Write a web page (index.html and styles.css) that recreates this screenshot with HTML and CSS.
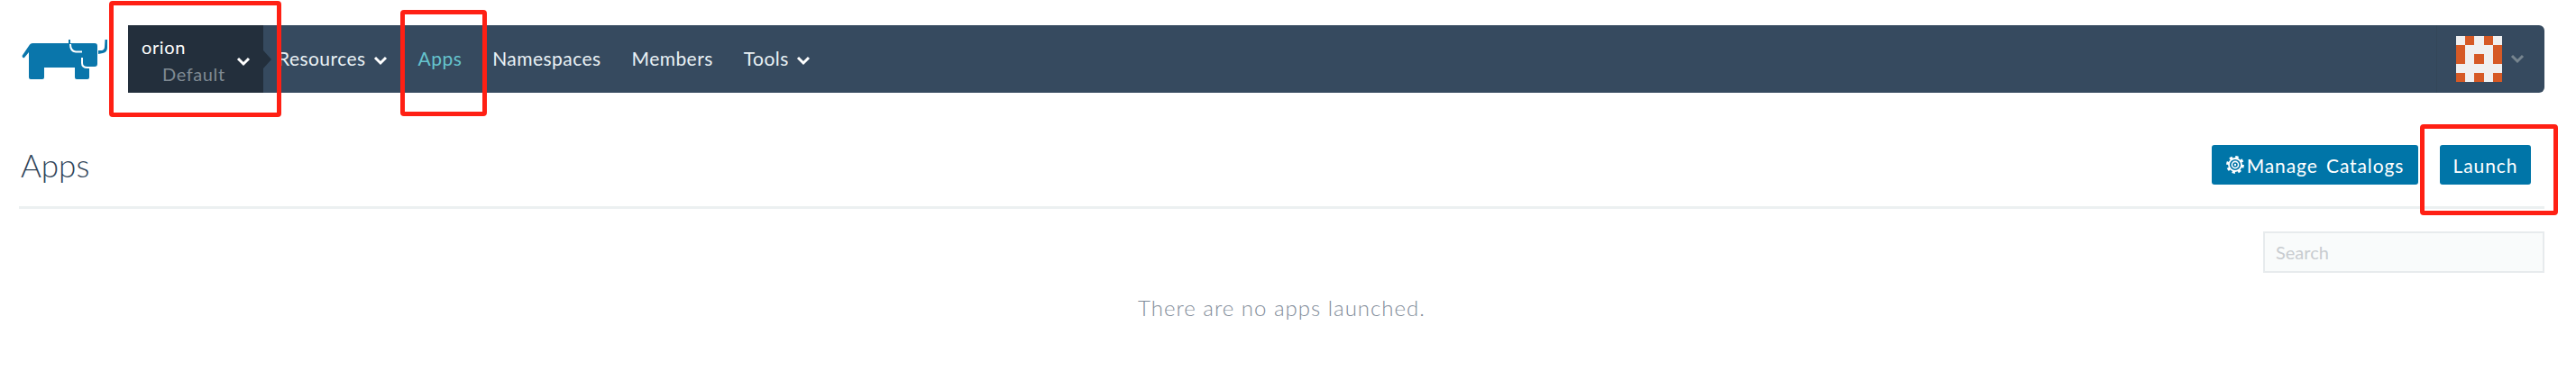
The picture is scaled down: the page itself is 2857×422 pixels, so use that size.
FILE: index.html
```html
<!DOCTYPE html>
<html lang="en">
<head>
  <meta charset="UTF-8">
  <title>Apps</title>
  <link rel="stylesheet" href="styles.css">
</head>
<body>

  <div class="header">
    <div class="logo">
      <svg width="100" height="50" viewBox="20 40 100 50">
        <path fill="#0a76ab" d="M23.5 62 L32 49.5 Q33 48 35 48 H75 V44 L77 44 V48 H104 Q107 48 107 51 V71 Q107 74 104 74 H98 V86 Q98 88 96 88 H84 Q82 88 82 86 V75 H48 V86 Q48 88 46 88 H33 Q31 88 31 86 V58 L26 64 Q24 65 23.500 62 Z"/>
        <path fill="none" stroke="#fff" stroke-width="2" d="M77 49 Q77 57 83 57.500 H90"/>
        <path fill="none" stroke="#fff" stroke-width="2" d="M90 64 V70 Q90 75 96 75 H99"/>
        <path fill="#0a76ab" d="M108 56 H112 Q115 55 115 52 L115.500 44 H118 L118 53 Q118 58 113 59 L108 60 Z"/>
      </svg>
    </div>
    <div class="nav">
      <div class="env">
        <div class="env-name">orion</div>
        <div class="env-sub">Default</div>
        <svg class="chevron env-chevron" width="16" height="11" viewBox="0 0 16 11"><path d="M2 2 L8 8 L14 2"/></svg>
      </div>
      <div class="links">
        <a class="link">Resources<svg class="chevron" width="16" height="11" viewBox="0 0 16 11"><path d="M2 2 L8 8 L14 2"/></svg></a>
        <a class="link active">Apps</a>
        <a class="link">Namespaces</a>
        <a class="link">Members</a>
        <a class="link">Tools<svg class="chevron" width="16" height="11" viewBox="0 0 16 11"><path d="M2 2 L8 8 L14 2"/></svg></a>
      </div>
      <div class="user">
        <svg width="51" height="51" viewBox="0 0 5 5" shape-rendering="crispEdges">
          <rect width="5" height="5" fill="#f0f0f0"/>
          <g fill="#d65a26">
            <rect x="1" y="0" width="1" height="1"/>
            <rect x="3" y="0" width="1" height="1"/>
            <rect x="0" y="1" width="1" height="2"/>
            <rect x="4" y="1" width="1" height="2"/>
            <rect x="2" y="2" width="1" height="1"/>
            <rect x="0" y="4" width="1" height="1"/>
            <rect x="2" y="4" width="1" height="1"/>
            <rect x="4" y="4" width="1" height="1"/>
          </g>
        </svg>
        <svg class="chevron muted" width="16" height="11" viewBox="0 0 16 11"><path d="M2 2 L8 8 L14 2"/></svg>
      </div>
    </div>
  </div>

  <div class="title-row">
    <h1>Apps</h1>
    <div class="actions">
      <button class="btn">
        <svg width="20" height="20" viewBox="0 0 20 20">
          <circle cx="10" cy="10" r="8.200" fill="none" stroke="#fff" stroke-width="3.400" stroke-dasharray="3.200 3.240"/>
          <circle cx="10" cy="10" r="7" fill="none" stroke="#fff" stroke-width="1.800"/>
          <circle cx="10" cy="10" r="3.600" fill="none" stroke="#fff" stroke-width="1.600"/>
          <circle cx="10" cy="10" r="1.200" fill="#fff"/>
        </svg>Manage Catalogs</button>
      <button class="btn launch">Launch</button>
    </div>
  </div>

  <div class="search-row">
    <input class="search" type="text" placeholder="Search">
  </div>

  <p class="empty">There are no apps launched.</p>

  <!-- red annotation boxes -->
  <div class="mark mark-env"></div>
  <div class="mark mark-apps"></div>
  <div class="mark mark-launch"></div>

</body>
</html>
```

FILE: styles.css
```css
body {
  font-family: Lato, "Open Sans", sans-serif;
  background-color: #fff;
  margin: 0;
  padding: 28px 35px 0 21px;
  height: 394px;
  overflow: hidden;
  position: relative;
}

.header {
  display: flex;
  height: 75px;
}

.logo {
  width: 121px;
  flex: none;
  padding-top: 12px;
  box-sizing: border-box;
}

.logo svg {
  display: block;
}

.nav {
  flex: 1;
  display: flex;
  align-items: center;
  background-color: #364a5f;
  border-radius: 0 6px 6px 0;
  color: #fff;
}

.env {
  position: relative;
  width: 150px;
  height: 75px;
  flex: none;
  box-sizing: border-box;
  padding: 9px 0 0 15px;
  background-color: #232f3c;
  font-size: 20px;
  letter-spacing: 0.6px;
}

/* little arrow pointing out of the env block */
.env::after {
  content: "";
  position: absolute;
  top: 28px;
  left: 100%;
  border-top: 10px solid transparent;
  border-bottom: 10px solid transparent;
  border-left: 9px solid #232f3c;
}

.env-name {
  line-height: 30px;
}

.env-sub {
  line-height: 30px;
  padding-left: 23px;
  color: #7f8a93;
}

.env-chevron {
  position: absolute;
  top: 35px;
  right: 14px;
}

.chevron path {
  fill: none;
  stroke: #fff;
  stroke-width: 3;
}

.chevron.muted path {
  stroke: #77858f;
}

.links {
  flex: 1;
  display: flex;
  align-items: center;
  gap: 34px;
  padding-left: 16px;
  padding-bottom: 2px;
  font-size: 21px;
  letter-spacing: 0.45px;
  color: #e9f1f5;
}

.link .chevron {
  margin-left: 8px;
}

.link.active {
  color: #65c3cd;
}

.user {
  display: flex;
  align-items: center;
  gap: 9px;
  width: 120px;
  height: 75px;
  box-sizing: border-box;
  padding-left: 21px;
  border-left: 1px solid #334659;
}

.title-row {
  display: flex;
  justify-content: space-between;
  align-items: center;
  margin-top: 58px;
  padding: 0 15px 24px 2px;
  border-bottom: 3px solid #ecf0f1;
}

.title-row h1 {
  margin: 0;
  font-size: 35px;
  font-weight: 300;
  color: #2f4358;
}

.actions {
  display: flex;
  gap: 24px;
}

.btn {
  display: flex;
  align-items: center;
  justify-content: center;
  gap: 3px;
  width: 229px;
  height: 44px;
  padding: 0;
  border: none;
  border-radius: 3px;
  background-color: #0075a8;
  color: #fff;
  font-family: inherit;
  font-size: 21px;
  letter-spacing: 0.9px;
  word-spacing: 3px;
}

.btn.launch {
  width: 101px;
}

.search-row {
  display: flex;
  justify-content: flex-end;
  margin-top: 25px;
}

.search {
  width: 312px;
  height: 46px;
  box-sizing: border-box;
  padding: 0 12px;
  background-color: #f9fbfb;
  border: 2px solid #e7ebed;
  font-family: inherit;
  font-size: 20px;
}

.search::placeholder {
  color: #c8ccd0;
}

.empty {
  margin: 24px 0 0;
  text-align: center;
  font-size: 24px;
  font-weight: 300;
  line-height: 30px;
  letter-spacing: 1px;
  color: #7f8b99;
}

.mark {
  position: absolute;
  box-sizing: border-box;
  border: 5px solid #ff2014;
  border-radius: 4px;
}

.mark-env {
  left: 121px;
  top: 1px;
  width: 191px;
  height: 129px;
}

.mark-apps {
  left: 444px;
  top: 11px;
  width: 96px;
  height: 118px;
}

.mark-launch {
  left: 2684px;
  top: 138px;
  width: 153px;
  height: 101px;
}
```
